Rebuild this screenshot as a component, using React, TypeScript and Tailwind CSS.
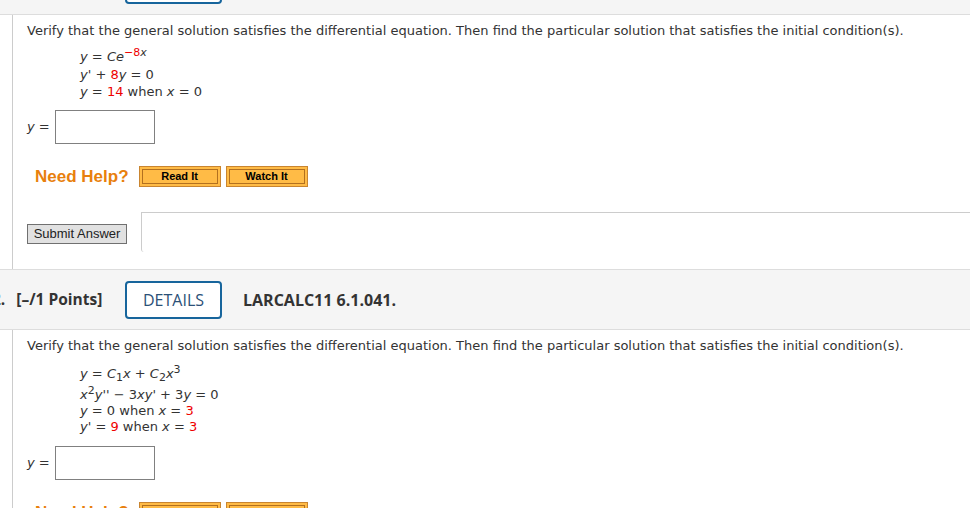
import React from 'react';

const body = { fontFamily: '"DejaVu Sans", Verdana, sans-serif' };
const arial = { fontFamily: '"Liberation Sans", Arial, sans-serif' };
const open = { fontFamily: '"Open Sans", sans-serif' };

const V = ({ children }: { children: React.ReactNode }) => <i className="italic">{children}</i>;
const R = ({ children }: { children: React.ReactNode }) => <span className="text-[#ee0000]">{children}</span>;

function DetailsButton({ className = '' }: { className?: string }) {
  return (
    <div
      className={`w-[97px] h-[38px] shrink-0 rounded-[4px] border-2 border-[#17659c] bg-white flex items-center justify-center text-[16px] text-[#2b5077] ${className}`}
      style={open}
    >
      DETAILS
    </div>
  );
}

function HelpButton({ label }: { label: string }) {
  return (
    <div className="w-[82px] h-[21px] border border-[#c98530] bg-[#ffbb46] p-[2px]">
      <div
        className="w-full h-full border border-[#b2701f] flex items-center justify-center text-[11px] font-bold text-black"
        style={arial}
      >
        {label}
      </div>
    </div>
  );
}

function AnswerRow() {
  return (
    <div className="flex items-center">
      <span className="w-[28px] text-[13px]">
        <V>y</V> =
      </span>
      <div className="w-[100px] h-[34px] border border-[#808080] bg-white" />
    </div>
  );
}

function NeedHelp() {
  return (
    <div className="flex items-center pl-[8px]">
      <span className="text-[17px] font-bold text-[#e8800d] mr-[10px]" style={arial}>
        Need Help?
      </span>
      <div className="flex gap-[5px]">
        <HelpButton label="Read It" />
        <HelpButton label="Watch It" />
      </div>
    </div>
  );
}

const intro =
  'Verify that the general solution satisfies the differential equation. Then find the particular solution that satisfies the initial condition(s).';

export default function App() {
  return (
    <div className="w-[970px] h-[508px] overflow-hidden bg-white text-[#333]" style={body}>
      {/* top band, previous header tail */}
      <div className="h-[15px] bg-[#f5f5f5] border-b border-[#dddddd] flex items-end overflow-hidden">
        <DetailsButton className="ml-[125px] mb-[10px]" />
      </div>

      {/* question 1 */}
      <div className="ml-[12px] border-l border-[#cccccc] h-[254px] pl-[14px] pt-[7px]">
        <p className="text-[13px] leading-[18px]">{intro}</p>
        <div className="ml-[53px] mt-[8px] text-[13px] leading-[17.5px]">
          <div>
            <V>y</V> = <V>Ce</V>
            <sup className="text-[11px]">
              <R>−8</R>
              <V>x</V>
            </sup>
          </div>
          <div>
            <V>y</V>' + <R>8</R>
            <V>y</V> = 0
          </div>
          <div>
            <V>y</V> = <R>14</R> when <V>x</V> = 0
          </div>
        </div>
        <div className="mt-[9px]">
          <AnswerRow />
        </div>
        <div className="mt-[20px]">
          <NeedHelp />
        </div>
        <div className="flex mt-[23px]">
          <div
            className="mt-[12px] h-[20px] w-[100px] border border-[#707070] bg-[#e1e1e1] flex items-center justify-center text-[13px] text-[#222]"
            style={arial}
          >
            Submit Answer
          </div>
          <div className="ml-[14px] flex-1 h-[40px] border-t border-l border-[#cccccc] rounded-bl-[3px]" />
        </div>
      </div>

      {/* question 2 header */}
      <div
        className="h-[61px] bg-[#f5f5f5] border-y border-[#dddddd] flex items-center font-bold text-[15.5px] text-[#333]"
        style={open}
      >
        <span className="w-[125px] shrink-0 flex">
          <span className="ml-[-8px]">2.</span>
          <span className="ml-[11px]">[–/1 Points]</span>
        </span>
        <DetailsButton className="font-normal" />
        <span className="ml-[21px] text-[16px]">LARCALC11 6.1.041.</span>
      </div>

      {/* question 2 */}
      <div className="ml-[12px] border-l border-[#cccccc] h-[200px] pl-[14px] pt-[7px]">
        <p className="text-[13px] leading-[18px]">{intro}</p>
        <div className="ml-[53px] mt-[9px] text-[13px] leading-[16px]">
          <div className="leading-[20px]">
            <V>y</V> = <V>C</V>
            <sub className="text-[11px]">1</sub>
            <V>x</V> + <V>C</V>
            <sub className="text-[11px]">2</sub>
            <V>x</V>
            <sup className="text-[11px]">3</sup>
          </div>
          <div className="mt-[3px]">
            <V>x</V>
            <sup className="text-[11px]">2</sup>
            <V>y</V>'' − 3<V>xy</V>' + 3<V>y</V> = 0
          </div>
          <div>
            <V>y</V> = 0 when <V>x</V> = <R>3</R>
          </div>
          <div>
            <V>y</V>' = <R>9</R> when <V>x</V> = <R>3</R>
          </div>
        </div>
        <div className="mt-[11px]">
          <AnswerRow />
        </div>
        <div className="mt-[20px]">
          <NeedHelp />
        </div>
      </div>
    </div>
  );
}
